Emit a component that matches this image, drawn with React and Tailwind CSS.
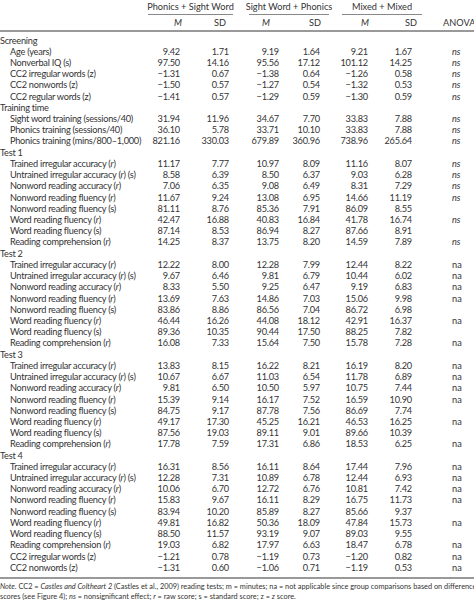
const sections = [
  {
    title: "Screening",
    rows: [
      ["Age (years)", "9.42", "1.71", "9.19", "1.64", "9.21", "1.67", "ns"],
      ["Nonverbal IQ (s)", "97.50", "14.16", "95.56", "17.12", "101.12", "14.25", "ns"],
      ["CC2 irregular words (z)", "−1.31", "0.67", "−1.38", "0.64", "−1.26", "0.58", "ns"],
      ["CC2 nonwords (z)", "−1.50", "0.57", "−1.27", "0.54", "−1.32", "0.53", "ns"],
      ["CC2 regular words (z)", "−1.41", "0.57", "−1.29", "0.59", "−1.30", "0.59", "ns"],
    ],
  },
  {
    title: "Training time",
    rows: [
      ["Sight word training (sessions/40)", "31.94", "11.96", "34.67", "7.70", "33.83", "7.88", "ns"],
      ["Phonics training (sessions/40)", "36.10", "5.78", "33.71", "10.10", "33.83", "7.88", "ns"],
      ["Phonics training (mins/800–1,000)", "821.16", "330.03", "679.89", "360.96", "738.96", "265.64", "ns"],
    ],
  },
  {
    title: "Test 1",
    rows: [
      ["Trained irregular accuracy (r)", "11.17", "7.77", "10.97", "8.09", "11.16", "8.07", "ns"],
      ["Untrained irregular accuracy (r) (s)", "8.58", "6.39", "8.50", "6.37", "9.03", "6.28", "ns"],
      ["Nonword reading accuracy (r)", "7.06", "6.35", "9.08", "6.49", "8.31", "7.29", "ns"],
      ["Nonword reading fluency (r)", "11.67", "9.24", "13.08", "6.95", "14.66", "11.19", "ns"],
      ["Nonword reading fluency (s)", "81.11", "8.76", "85.36", "7.91", "86.09", "8.55", ""],
      ["Word reading fluency (r)", "42.47", "16.88", "40.83", "16.84", "41.78", "16.74", "ns"],
      ["Word reading fluency (s)", "87.14", "8.53", "86.94", "8.27", "87.66", "8.91", ""],
      ["Reading comprehension (r)", "14.25", "8.37", "13.75", "8.20", "14.59", "7.89", "ns"],
    ],
  },
  {
    title: "Test 2",
    rows: [
      ["Trained irregular accuracy (r)", "12.22", "8.00", "12.28", "7.99", "12.44", "8.22", "na"],
      ["Untrained irregular accuracy (r) (s)", "9.67", "6.46", "9.81", "6.79", "10.44", "6.02", "na"],
      ["Nonword reading accuracy (r)", "8.33", "5.50", "9.25", "6.47", "9.19", "6.83", "na"],
      ["Nonword reading fluency (r)", "13.69", "7.63", "14.86", "7.03", "15.06", "9.98", "na"],
      ["Nonword reading fluency (s)", "83.86", "8.86", "86.56", "7.04", "86.72", "6.98", ""],
      ["Word reading fluency (r)", "46.44", "16.26", "44.08", "18.12", "42.91", "16.37", "na"],
      ["Word reading fluency (s)", "89.36", "10.35", "90.44", "17.50", "88.25", "7.82", ""],
      ["Reading comprehension (r)", "16.08", "7.33", "15.64", "7.50", "15.78", "7.28", "na"],
    ],
  },
  {
    title: "Test 3",
    rows: [
      ["Trained irregular accuracy (r)", "13.83", "8.15", "16.22", "8.21", "16.19", "8.20", "na"],
      ["Untrained irregular accuracy (r) (s)", "10.67", "6.67", "11.03", "6.54", "11.78", "6.89", "na"],
      ["Nonword reading accuracy (r)", "9.81", "6.50", "10.50", "5.97", "10.75", "7.44", "na"],
      ["Nonword reading fluency (r)", "15.39", "9.14", "16.17", "7.52", "16.59", "10.90", "na"],
      ["Nonword reading fluency (s)", "84.75", "9.17", "87.78", "7.56", "86.69", "7.74", ""],
      ["Word reading fluency (r)", "49.17", "17.30", "45.25", "16.21", "46.53", "16.25", "na"],
      ["Word reading fluency (s)", "87.56", "19.03", "89.11", "9.01", "89.66", "10.39", ""],
      ["Reading comprehension (r)", "17.78", "7.59", "17.31", "6.86", "18.53", "6.25", "na"],
    ],
  },
  {
    title: "Test 4",
    rows: [
      ["Trained irregular accuracy (r)", "16.31", "8.56", "16.11", "8.64", "17.44", "7.96", "na"],
      ["Untrained irregular accuracy (r) (s)", "12.28", "7.31", "10.89", "6.78", "12.44", "6.93", "na"],
      ["Nonword reading accuracy (r)", "10.06", "6.70", "12.72", "6.76", "10.81", "7.42", "na"],
      ["Nonword reading fluency (r)", "15.83", "9.67", "16.11", "8.29", "16.75", "11.73", "na"],
      ["Nonword reading fluency (s)", "83.94", "10.20", "85.89", "8.27", "85.66", "9.37", ""],
      ["Word reading fluency (r)", "49.81", "16.82", "50.36", "18.09", "47.84", "15.73", "na"],
      ["Word reading fluency (s)", "88.50", "11.57", "93.19", "9.07", "89.03", "9.55", ""],
      ["Reading comprehension (r)", "19.03", "6.82", "17.97", "6.63", "18.47", "6.78", "na"],
      ["CC2 irregular words (z)", "−1.21", "0.78", "−1.19", "0.73", "−1.20", "0.82", "na"],
      ["CC2 nonwords (z)", "−1.31", "0.60", "−1.06", "0.71", "−1.19", "0.53", "na"],
    ],
  },
];

const rowGrid =
  "grid grid-cols-[140px_40px_49px_50px_41px_48px_44px_62px] h-[11.22px] items-center leading-none";

// italicise the "(r)" marker inside a label
const Label = ({ text }) => {
  const parts = text.split("(r)");
  if (parts.length === 1) return text;
  return (
    <>
      {parts[0]}(<i>r</i>){parts[1]}
    </>
  );
};

const DataRow = ({ row }) => (
  <div className={rowGrid}>
    <div className="pl-[10px] whitespace-nowrap tracking-[-0.25px]">
      <Label text={row[0]} />
    </div>
    {row.slice(1, 7).map((v, i) => (
      <div key={i} className="text-right whitespace-nowrap tracking-[-0.2px]">
        {v}
      </div>
    ))}
    <div className="pl-[40px]">
      {row[7] === "ns" ? <i>ns</i> : row[7]}
    </div>
  </div>
);

export default function App() {
  return (
    <div
      className="w-[474px] h-[602px] overflow-hidden bg-white text-[#333] text-[9.2px]"
      style={{ fontFamily: "Lato, 'Open Sans', sans-serif" }}
    >
      {/* group headings */}
      <div className="grid grid-cols-[148px_85px_16px_80px_13px_80px_1fr] h-[15px] items-center leading-none whitespace-nowrap">
        <div />
        <div className="h-full flex items-center justify-center border-b border-[#888]">
          Phonics + Sight Word
        </div>
        <div />
        <div className="h-full flex items-center justify-center border-b border-[#888]">
          Sight Word + Phonics
        </div>
        <div />
        <div className="h-full flex items-center justify-center border-b border-[#888]">
          Mixed + Mixed
        </div>
        <div />
      </div>

      {/* M / SD headings */}
      <div className="grid grid-cols-[160px_36px_48px_44px_54px_46px_46px_1fr] h-[17px] items-center leading-none border-b-2 border-[#999] text-center whitespace-nowrap">
        <div />
        <div className="italic">M</div>
        <div>SD</div>
        <div className="italic">M</div>
        <div>SD</div>
        <div className="italic">M</div>
        <div>SD</div>
        <div className="text-left pl-[9px]">ANOVA</div>
      </div>

      {/* body */}
      <div className="pt-[2.5px] pb-[4px] border-b-2 border-[#999]">
        {sections.map((s) => (
          <div key={s.title}>
            <div className={rowGrid}>
              <div className="whitespace-nowrap tracking-[-0.25px]">{s.title}</div>
            </div>
            {s.rows.map((r, i) => (
              <DataRow key={i} row={r} />
            ))}
          </div>
        ))}
      </div>

      {/* note */}
      <div className="pt-[3px] text-[7.35px] leading-[10px] whitespace-nowrap">
        <div>
          <i>Note.</i> CC2 = <i>Castles and Coltheart 2</i> (Castles et al., 2009) reading tests; m = minutes; na = not applicable since group comparisons based on difference
        </div>
        <div>
          scores (see Figure 4); <i>ns</i> = nonsignificant effect; <i>r</i> = raw score; s = standard score; z = <i>z</i> score.
        </div>
      </div>
    </div>
  );
}
